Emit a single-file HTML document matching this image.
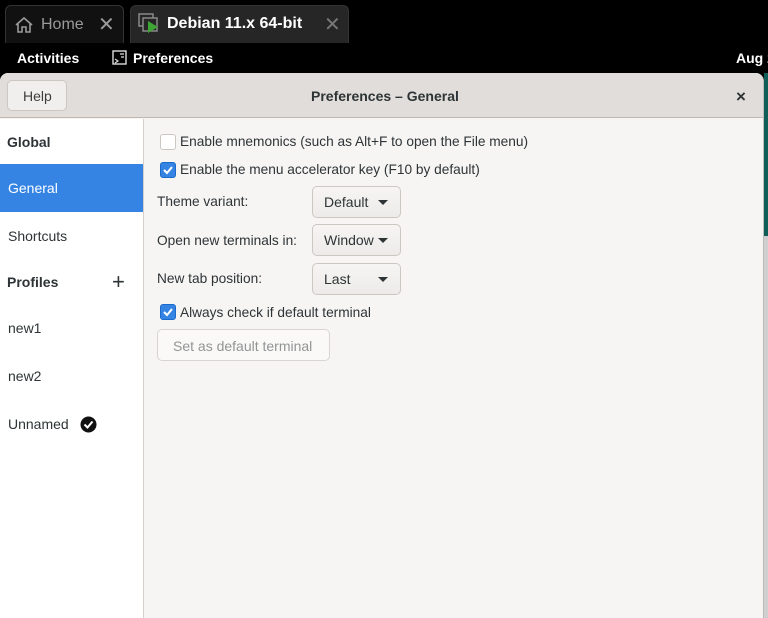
<!DOCTYPE html>
<html><head><meta charset="utf-8"><style>
*{margin:0;padding:0;box-sizing:border-box}
body{width:768px;height:618px;overflow:hidden;background:#000;font-family:"Liberation Sans",sans-serif;font-size:14px;position:relative;color:#2e3436;white-space:nowrap}
.abs{position:absolute}
.tab{position:absolute;top:5px;height:38px;border:1px solid #333;border-bottom:none;border-radius:6px 6px 0 0;}
.side div{position:absolute;left:8px;font-size:14px}
.dd{position:absolute;left:312px;width:89px;height:32px;border:1px solid #cdc7c2;border-radius:5px;background:linear-gradient(#f6f5f4,#edebe9);font-size:14px;padding:7px 0 0 11px}
.dd:after{content:"";position:absolute;right:12px;top:13px;border-left:5px solid transparent;border-right:5px solid transparent;border-top:5px solid #2e3436}
.cb{position:absolute;left:160px;width:16px;height:16px;border-radius:3px}
.on{background:#3584e4;border:1px solid #1b6acb}
.off{background:#fff;border:1px solid #cdc7c2}
.lbl{position:absolute;font-size:13.7px}
</style></head><body>
<div class="tab" style="left:5px;width:119px;background:#111">
 <svg class="abs" style="left:8px;top:10px" width="20" height="18" viewBox="0 0 20 18"><path d="M2 9 L10 2 L18 9 M4 7 V16 H8 V11 H12 V16 H16 V7" fill="none" stroke="#9a9a9a" stroke-width="1.6"/></svg>
 <span class="abs" style="left:35px;top:10px;color:#9a9a9a;font-size:16px">Home</span>
 <span class="abs" style="left:92px;top:6px;color:#9a9a9a;font-size:20px">✕</span>
</div>
<div class="tab" style="left:130px;width:219px;background:#262626">
 <svg class="abs" style="left:7px;top:7px" width="24" height="22" viewBox="0 0 24 22"><rect x="1" y="1" width="14" height="12" fill="none" stroke="#888" stroke-width="1.5"/><rect x="5" y="5" width="14" height="13" fill="#262626" stroke="#888" stroke-width="1.5"/><path d="M10 8 L20 14 L10 20Z" fill="#3ca534"/></svg>
 <span class="abs" style="left:36px;top:9px;color:#fff;font-size:16px;font-weight:bold">Debian 11.x 64-bit</span>
 <span class="abs" style="left:193px;top:6px;color:#777;font-size:20px">✕</span>
</div>
<div class="abs" style="left:17px;top:50px;color:#fff;font-weight:bold;font-size:14px">Activities</div>
<svg class="abs" style="left:112px;top:50px" width="15" height="15"><rect x="1" y="1" width="13" height="13" fill="none" stroke="#ddd" stroke-width="1.4"/><path d="M3 9 L6 11 L3 13 M8 4 h4 M9 7 h3" stroke="#ddd" stroke-width="1.2" fill="none"/></svg>
<div class="abs" style="left:133px;top:50px;color:#fff;font-weight:bold;font-size:14px">Preferences</div>
<div class="abs" style="left:736px;top:50px;color:#fff;font-weight:bold;font-size:14px">Aug 2</div>
<div class="abs" style="left:764px;top:73px;width:4px;height:163px;background:#0f5e58"></div>
<div class="abs" style="left:764px;top:236px;width:4px;height:382px;background:#cfcfcf"></div>
<div class="abs" style="left:0;top:73px;width:764px;height:545px;background:#f6f5f4;border-radius:8px 8px 0 0;overflow:hidden;border-right:1px solid #bbb">
 <div class="abs" style="left:0;top:0;width:764px;height:45px;background:#e0ddda;border-bottom:1px solid #c0b8b0"></div>
 <div class="abs" style="left:7px;top:7px;width:60px;height:31px;border:1px solid #cdc7c2;border-radius:5px;background:#f1efed;font-size:14px;padding:7px 0 0 15px;color:#3d3d3d">Help</div>
 <div class="abs" style="left:311px;top:15px;font-weight:bold;font-size:14px">Preferences – General</div>
 <div class="abs" style="left:736px;top:14px;font-size:17px;font-weight:bold">×</div>
 <div class="abs side" style="left:0;top:46px;width:144px;height:500px;background:#fff;border-right:1px solid #d5d0cc">
  <div style="left:7px;top:15px;font-weight:bold">Global</div>
  <div style="left:0;top:45px;width:143px;height:48px;background:#3584e4"></div>
  <div style="top:61px;color:#fff">General</div>
  <div style="top:109px">Shortcuts</div>
  <div style="left:7px;top:155px;font-weight:bold">Profiles</div>
  <div style="left:112px;top:150px;font-size:22px;font-weight:300">+</div>
  <div style="top:201px">new1</div>
  <div style="top:249px">new2</div>
  <div style="top:297px">Unnamed</div>
  <svg class="abs" style="left:80px;top:297px;position:absolute" width="17" height="17"><circle cx="8.5" cy="8.5" r="8" fill="#111"/><path d="M4.5 8.5 L7.5 11.5 L12.5 5.5" stroke="#fff" stroke-width="2" fill="none"/></svg>
 </div>
</div>
<div class="cb off" style="top:134px"></div>
<div class="lbl" style="left:180px;top:134px">Enable mnemonics (such as Alt+F to open the File menu)</div>
<div class="cb on" style="top:162px"><svg width="14" height="14"><path d="M3 7 L6 10 L11 4" stroke="#fff" stroke-width="2" fill="none"/></svg></div>
<div class="lbl" style="left:180px;top:162px">Enable the menu accelerator key (F10 by default)</div>
<div class="lbl" style="left:157px;top:194px">Theme variant:</div>
<div class="dd" style="top:186px">Default</div>
<div class="lbl" style="left:157px;top:233px">Open new terminals in:</div>
<div class="dd" style="top:224px">Window</div>
<div class="lbl" style="left:157px;top:271px">New tab position:</div>
<div class="dd" style="top:263px">Last</div>
<div class="cb on" style="top:304px"><svg width="14" height="14"><path d="M3 7 L6 10 L11 4" stroke="#fff" stroke-width="2" fill="none"/></svg></div>
<div class="lbl" style="left:180px;top:305px">Always check if default terminal</div>
<div class="abs" style="left:157px;top:329px;width:173px;height:32px;border:1px solid #d8d4d0;border-radius:5px;background:#faf9f8;color:#929595;font-size:14px;padding:8px 0 0 15px">Set as default terminal</div>
</body></html>
